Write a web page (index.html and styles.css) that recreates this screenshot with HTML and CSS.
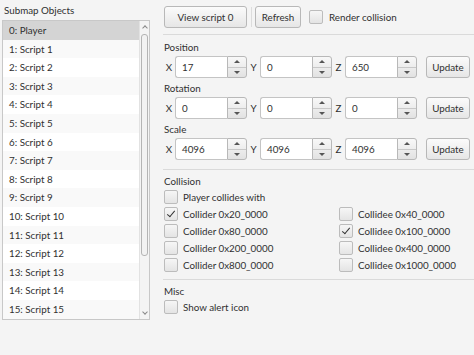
FILE: index.html
```html
<!DOCTYPE html>
<html lang="en">
<head>
  <meta charset="UTF-8">
  <title>Submap Objects</title>
  <link rel="stylesheet" href="styles.css">
</head>
<body>
<div class="app">
  <!-- left: object list -->
  <div class="left-side">
    <div class="pane-title">Submap Objects</div>
    <div class="list">
      <ul class="rows">
        <li class="selected">0: Player</li>
        <li>1: Script 1</li>
        <li>2: Script 2</li>
        <li>3: Script 3</li>
        <li>4: Script 4</li>
        <li>5: Script 5</li>
        <li>6: Script 6</li>
        <li>7: Script 7</li>
        <li>8: Script 8</li>
        <li>9: Script 9</li>
        <li>10: Script 10</li>
        <li>11: Script 11</li>
        <li>12: Script 12</li>
        <li>13: Script 13</li>
        <li>14: Script 14</li>
        <li>15: Script 15</li>
      </ul>
      <div class="scrollbar">
        <span class="chevron up"></span>
        <div class="track"><div class="thumb"></div></div>
        <span class="chevron down"></span>
      </div>
    </div>
  </div>

  <!-- right: properties -->
  <div class="right-side">
    <div class="toolbar">
      <button class="btn view-btn">View script 0</button>
      <span class="tool-sep"></span>
      <button class="btn refresh-btn">Refresh</button>
      <label class="check toolbar-check"><span class="box"></span>Render collision</label>
    </div>
    <div class="sep"></div>

    <div class="group">
      <div class="group-title">Position</div>
      <div class="vec-row">
        <span class="axis">X</span>
        <div class="spinner"><span class="field">17</span><span class="arrows"><i class="up"></i><i class="down"></i></span></div>
        <span class="axis">Y</span>
        <div class="spinner"><span class="field">0</span><span class="arrows"><i class="up"></i><i class="down"></i></span></div>
        <span class="axis">Z</span>
        <div class="spinner"><span class="field">650</span><span class="arrows"><i class="up"></i><i class="down"></i></span></div>
        <button class="btn update-btn">Update</button>
      </div>
    </div>

    <div class="group">
      <div class="group-title">Rotation</div>
      <div class="vec-row">
        <span class="axis">X</span>
        <div class="spinner"><span class="field">0</span><span class="arrows"><i class="up"></i><i class="down"></i></span></div>
        <span class="axis">Y</span>
        <div class="spinner"><span class="field">0</span><span class="arrows"><i class="up"></i><i class="down"></i></span></div>
        <span class="axis">Z</span>
        <div class="spinner"><span class="field">0</span><span class="arrows"><i class="up"></i><i class="down"></i></span></div>
        <button class="btn update-btn">Update</button>
      </div>
    </div>

    <div class="group">
      <div class="group-title">Scale</div>
      <div class="vec-row">
        <span class="axis">X</span>
        <div class="spinner"><span class="field">4096</span><span class="arrows"><i class="up"></i><i class="down"></i></span></div>
        <span class="axis">Y</span>
        <div class="spinner"><span class="field">4096</span><span class="arrows"><i class="up"></i><i class="down"></i></span></div>
        <span class="axis">Z</span>
        <div class="spinner"><span class="field">4096</span><span class="arrows"><i class="up"></i><i class="down"></i></span></div>
        <button class="btn update-btn">Update</button>
      </div>
    </div>

    <div class="sep sep-lower"></div>

    <div class="section-title">Collision</div>
    <div class="collision-grid">
      <label class="check"><span class="box"></span>Player collides with</label>
      <span></span>
      <label class="check"><span class="box checked"></span>Collider 0x20_0000</label>
      <label class="check"><span class="box"></span>Collidee 0x40_0000</label>
      <label class="check"><span class="box"></span>Collider 0x80_0000</label>
      <label class="check"><span class="box checked"></span>Collidee 0x100_0000</label>
      <label class="check"><span class="box"></span>Collider 0x200_0000</label>
      <label class="check"><span class="box"></span>Collidee 0x400_0000</label>
      <label class="check"><span class="box"></span>Collider 0x800_0000</label>
      <label class="check"><span class="box"></span>Collidee 0x1000_0000</label>
    </div>

    <div class="sep sep-misc"></div>

    <div class="section-title">Misc</div>
    <label class="check"><span class="box"></span>Show alert icon</label>
  </div>
</div>
</body>
</html>
```

FILE: styles.css
```css
body {
  margin: 0;
  background: #f4f4f4;
  font-family: Lato, "Noto Sans", sans-serif;
  font-size: 9.8px;
  color: #303030;
}

.app {
  display: flex;
  height: 355px;
}

/* left side list */
.left-side {
  width: 148px;
  padding-left: 2px;
  display: flex;
  flex-direction: column;
}

.pane-title {
  height: 20px;
  line-height: 20px;
  padding-left: 2px;
}

.list {
  display: flex;
  height: 300px;
  border: 1px solid #c8c8c8;
  background: #fff;
  box-sizing: border-box;
}

.rows {
  list-style: none;
  margin: 0;
  padding: 0;
  flex: 1;
}

.rows li {
  height: 18.6px;
  line-height: 18.6px;
  padding-left: 6px;
  background: #fff;
}

.rows li:nth-child(even) {
  background: #f9f9f9;
}

.rows li.selected {
  background: #d4d4d4;
}

.scrollbar {
  width: 9px;
  border-left: 1px solid #e2e2e2;
  background: #f4f4f4;
  display: flex;
  flex-direction: column;
  align-items: center;
}

.chevron {
  width: 3px;
  height: 3px;
  border-left: 1px solid #888;
  border-top: 1px solid #888;
  margin: 4px 0;
}

.chevron.up {
  transform: rotate(45deg);
  margin-top: 5px;
}

.chevron.down {
  transform: rotate(-135deg);
  margin-bottom: 5px;
}

.track {
  flex: 1;
  width: 100%;
  display: flex;
  justify-content: center;
}

.thumb {
  width: 5px;
  height: 220px;
  border: 1px solid #b4b4b4;
  border-radius: 3px;
  background: #f2f2f2;
}

/* right side */
.right-side {
  flex: 1;
  margin-left: 13px;
}

.toolbar {
  display: flex;
  align-items: center;
  height: 22px;
  padding: 6px 0 0 1px;
}

.btn {
  font: inherit;
  color: #303030;
  height: 22px;
  padding: 0;
  border: 1px solid #b8b8b8;
  border-radius: 3px;
  background: linear-gradient(#fbfbfb, #e6e6e6);
}

.view-btn {
  width: 83px;
}

.tool-sep {
  width: 1px;
  height: 20px;
  margin: 0 3px 0 4px;
  background: #dcdcdc;
}

.refresh-btn {
  width: 46px;
}

.check {
  display: flex;
  align-items: center;
  gap: 5px;
  height: 17px;
}

.toolbar-check {
  margin-left: 8px;
  gap: 6px;
}

.box {
  width: 12px;
  height: 12px;
  border: 1px solid #bcbcbc;
  border-radius: 2px;
  background: linear-gradient(#f6f6f6, #e4e4e4);
  position: relative;
  flex-shrink: 0;
}

.box.checked::after {
  content: "";
  position: absolute;
  left: 4px;
  top: 1px;
  width: 3px;
  height: 7px;
  border-right: 1.5px solid #333;
  border-bottom: 1.5px solid #333;
  transform: rotate(40deg);
}

.sep {
  height: 1px;
  background: #dadada;
  margin-top: 6px;
}

.group-title {
  height: 18px;
  line-height: 18px;
  padding-left: 1px;
}

.sep + .group .group-title {
  margin-top: 3px;
}

.vec-row {
  display: flex;
  height: 23px;
}

.axis {
  width: 13px;
  height: 22px;
  line-height: 22px;
  text-align: center;
}

.vec-row .axis:first-child {
  width: 12px;
}

.spinner {
  display: flex;
  width: 72px;
  height: 22px;
}

.field {
  flex: 1;
  background: #fff;
  border: 1px solid #c4c4c4;
  border-right: none;
  border-radius: 3px 0 0 3px;
  line-height: 20px;
  padding-left: 6px;
}

.arrows {
  width: 18px;
  display: flex;
  flex-direction: column;
  border: 1px solid #b8b8b8;
  border-radius: 0 3px 3px 0;
  background: linear-gradient(#f8f8f8, #e2e2e2);
}

.arrows i {
  flex: 1;
  display: flex;
  align-items: center;
  justify-content: center;
}

.arrows i.up {
  border-bottom: 1px solid #c8c8c8;
}

.arrows i::after {
  content: "";
  border-left: 3px solid transparent;
  border-right: 3px solid transparent;
}

.arrows i.up::after {
  border-bottom: 3px solid #555;
}

.arrows i.down::after {
  border-top: 3px solid #555;
}

.update-btn {
  width: 44px;
  margin-left: 9px;
}

.sep-lower {
  margin-top: 8px;
}

.section-title {
  height: 14px;
  line-height: 14px;
  margin-top: 4px;
  padding-left: 1px;
}

.collision-grid {
  display: grid;
  grid-template-columns: 175px 1fr;
}

.right-side > .check,
.collision-grid .check {
  padding-left: 1px;
}

.sep-misc {
  margin-top: 6px;
}
```
